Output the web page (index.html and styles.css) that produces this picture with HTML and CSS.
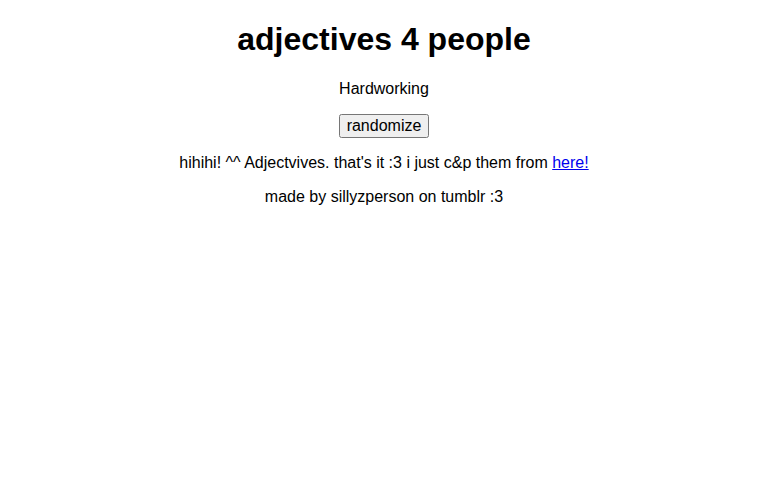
FILE: index.html
```html
<!DOCTYPE html>
<html lang="en">
<head>
    <meta charset="UTF-8">
    <meta name="viewport" content="width=device-width, initial-scale=1.0">
    <title>adjectives 4 people</title>
    <link rel="stylesheet" href="styles.css">
</head>
<body>
    <h1>adjectives 4 people</h1>
    <p id="adjective">Hardworking</p>
    <button class="randomize">randomize</button>
    <p>hihihi! ^^ Adjectvives. that's it :3 i just c&amp;p them from <a href="#">here!</a></p>
    <p>made by sillyzperson on tumblr :3</p>
</body>
</html>
```

FILE: styles.css
```css
body {
    font-family: "Liberation Sans", Arial, sans-serif;
    text-align: center;
    margin: 0 8px;
}
button.randomize {
    font-family: "Liberation Sans", Arial, sans-serif;
    font-size: 16px;
}
```
